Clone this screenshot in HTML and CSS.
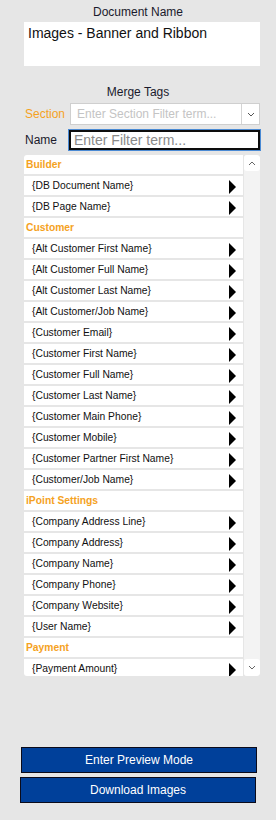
FILE: index.html
```html
<!DOCTYPE html>
<html>
<head>
<meta charset="utf-8">
<link rel="stylesheet" href="styles.css">
</head>
<body>
<div class="panel">
  <div class="label doc-label">Document Name</div>
  <div class="docname">Images - Banner and Ribbon</div>
  <div class="label merge-label">Merge Tags</div>
  <div class="field-row section-row">
    <span class="field-label orange">Section</span>
    <div class="select">
      <span class="placeholder small">Enter Section Filter term...</span>
      <span class="select-arrow"><svg width="8" height="5" viewBox="0 0 8 5"><polyline points="1,1 4,4 7,1" fill="none" stroke="#555" stroke-width="1"/></svg></span>
    </div>
  </div>
  <div class="field-row name-row">
    <span class="field-label">Name</span>
    <div class="input"><span class="placeholder">Enter Filter term...</span></div>
  </div>
  <div class="list-wrap">
    <div class="list">
      <div class="row head">Builder</div>
      <div class="row item"><span>{DB Document Name}</span><i class="tri"></i></div>
      <div class="row item"><span>{DB Page Name}</span><i class="tri"></i></div>
      <div class="row head">Customer</div>
      <div class="row item"><span>{Alt Customer First Name}</span><i class="tri"></i></div>
      <div class="row item"><span>{Alt Customer Full Name}</span><i class="tri"></i></div>
      <div class="row item"><span>{Alt Customer Last Name}</span><i class="tri"></i></div>
      <div class="row item"><span>{Alt Customer/Job Name}</span><i class="tri"></i></div>
      <div class="row item"><span>{Customer Email}</span><i class="tri"></i></div>
      <div class="row item"><span>{Customer First Name}</span><i class="tri"></i></div>
      <div class="row item"><span>{Customer Full Name}</span><i class="tri"></i></div>
      <div class="row item"><span>{Customer Last Name}</span><i class="tri"></i></div>
      <div class="row item"><span>{Customer Main Phone}</span><i class="tri"></i></div>
      <div class="row item"><span>{Customer Mobile}</span><i class="tri"></i></div>
      <div class="row item"><span>{Customer Partner First Name}</span><i class="tri"></i></div>
      <div class="row item"><span>{Customer/Job Name}</span><i class="tri"></i></div>
      <div class="row head">iPoint Settings</div>
      <div class="row item"><span>{Company Address Line}</span><i class="tri"></i></div>
      <div class="row item"><span>{Company Address}</span><i class="tri"></i></div>
      <div class="row item"><span>{Company Name}</span><i class="tri"></i></div>
      <div class="row item"><span>{Company Phone}</span><i class="tri"></i></div>
      <div class="row item"><span>{Company Website}</span><i class="tri"></i></div>
      <div class="row item"><span>{User Name}</span><i class="tri"></i></div>
      <div class="row head">Payment</div>
      <div class="row item"><span>{Payment Amount}</span><i class="tri"></i></div>
    </div>
    <div class="scrollbar">
      <div class="sb-btn"><svg width="8" height="5" viewBox="0 0 8 5"><polyline points="1,4 4,1 7,4" fill="none" stroke="#666" stroke-width="1"/></svg></div>
      <div class="sb-track"></div>
      <div class="sb-btn"><svg width="8" height="5" viewBox="0 0 8 5"><polyline points="1,1 4,4 7,1" fill="none" stroke="#666" stroke-width="1"/></svg></div>
    </div>
  </div>
  <div class="buttons">
    <div class="btn btn-preview">Enter Preview Mode</div>
    <div class="btn btn-download">Download Images</div>
  </div>
</div>
</body>
</html>
```
FILE: styles.css
```css
html, body {
  margin: 0;
  padding: 0;
  background: #e6e6e6;
}
body {
  font-family: "Liberation Sans", Arial, sans-serif;
  color: #1a1a2c;
  width: 276px;
  height: 820px;
  overflow: hidden;
}
.panel {
  display: flex;
  flex-direction: column;
}
.label {
  font-size: 12px;
  line-height: 14px;
  text-align: center;
}
.doc-label {
  padding-top: 5px;
  margin-bottom: 3px;
}
.docname {
  margin-left: 24px;
  width: 236px;
  height: 44px;
  box-sizing: border-box;
  background: #fff;
  padding: 3px 4px;
  font-size: 14px;
  line-height: 16px;
  color: #111;
}
.merge-label {
  margin-top: 19px;
}
.field-row {
  display: flex;
  align-items: center;
  margin-left: 24px;
  width: 236px;
}
.section-row {
  margin-top: 4px;
  height: 22px;
}
.name-row {
  margin-top: 5px;
  height: 20px;
}
.field-label {
  font-size: 12px;
  padding-left: 1px;
  width: 45px;
  flex: none;
}
.orange {
  color: #f5a21e;
}
.select {
  flex: 1;
  height: 22px;
  box-sizing: border-box;
  border: 1px solid #cfcfcf;
  background: #fff;
  display: flex;
  align-items: center;
}
.placeholder {
  flex: 1;
  font-size: 14px;
  color: #8a8a8a;
  padding-left: 4px;
  white-space: nowrap;
}
.placeholder.small {
  font-size: 12px;
  color: #c4c4c4;
  padding-left: 6px;
}
.select-arrow {
  width: 17px;
  height: 20px;
  border-left: 1px solid #d4d4d4;
  display: flex;
  align-items: center;
  justify-content: center;
}
.name-row .field-label {
  width: 44px;
}
.input {
  flex: 1;
  height: 20px;
  box-sizing: border-box;
  border: 1px solid #0d0d0d;
  box-shadow: 0 0 0 1px #4a8ad4, inset 0 0 0 1px #0d0d0d;
  background: #fff;
  display: flex;
  align-items: center;
}
.input .placeholder {
  padding-left: 4px;
}
.list-wrap {
  margin-top: 5px;
  margin-left: 24px;
  width: 236px;
  height: 521px;
  display: flex;
  gap: 1px;
  overflow: hidden;
  border-radius: 3px;
}
.list {
  flex: 1;
  display: flex;
  flex-direction: column;
  gap: 2px;
}
.row {
  flex: none;
  height: 19px;
  line-height: 19px;
  background: #fff;
  font-size: 10.3px;
  white-space: nowrap;
}
.head {
  padding-left: 2px;
  font-weight: bold;
  color: #f5a21e;
}
.item {
  display: flex;
  align-items: center;
  justify-content: space-between;
  padding-left: 8px;
  color: #111;
}
.tri {
  width: 0;
  height: 0;
  border-left: 7px solid #000;
  border-top: 7px solid transparent;
  border-bottom: 7px solid transparent;
  margin-right: 7px;
  margin-top: 2px;
}
.scrollbar {
  width: 16px;
  flex: none;
  display: flex;
  flex-direction: column;
  background: #f3f3f3;
  border-radius: 3px;
}
.sb-btn {
  height: 16px;
  background: #fff;
  display: flex;
  align-items: center;
  justify-content: center;
  border-radius: 3px;
}
.sb-btn:last-child {
  height: 17px;
}
.sb-track {
  flex: 1;
}
.buttons {
  margin-top: 71px;
  display: flex;
  flex-direction: column;
  gap: 4px;
}
.btn {
  height: 26px;
  width: 236px;
  box-sizing: border-box;
  border: 1px solid #0b0b1a;
  background: #00409a;
  color: #fff;
  font-size: 12px;
  line-height: 24px;
  text-align: center;
}
.btn-preview {
  margin-left: 21px;
}
.btn-download {
  margin-left: 20px;
}
```
